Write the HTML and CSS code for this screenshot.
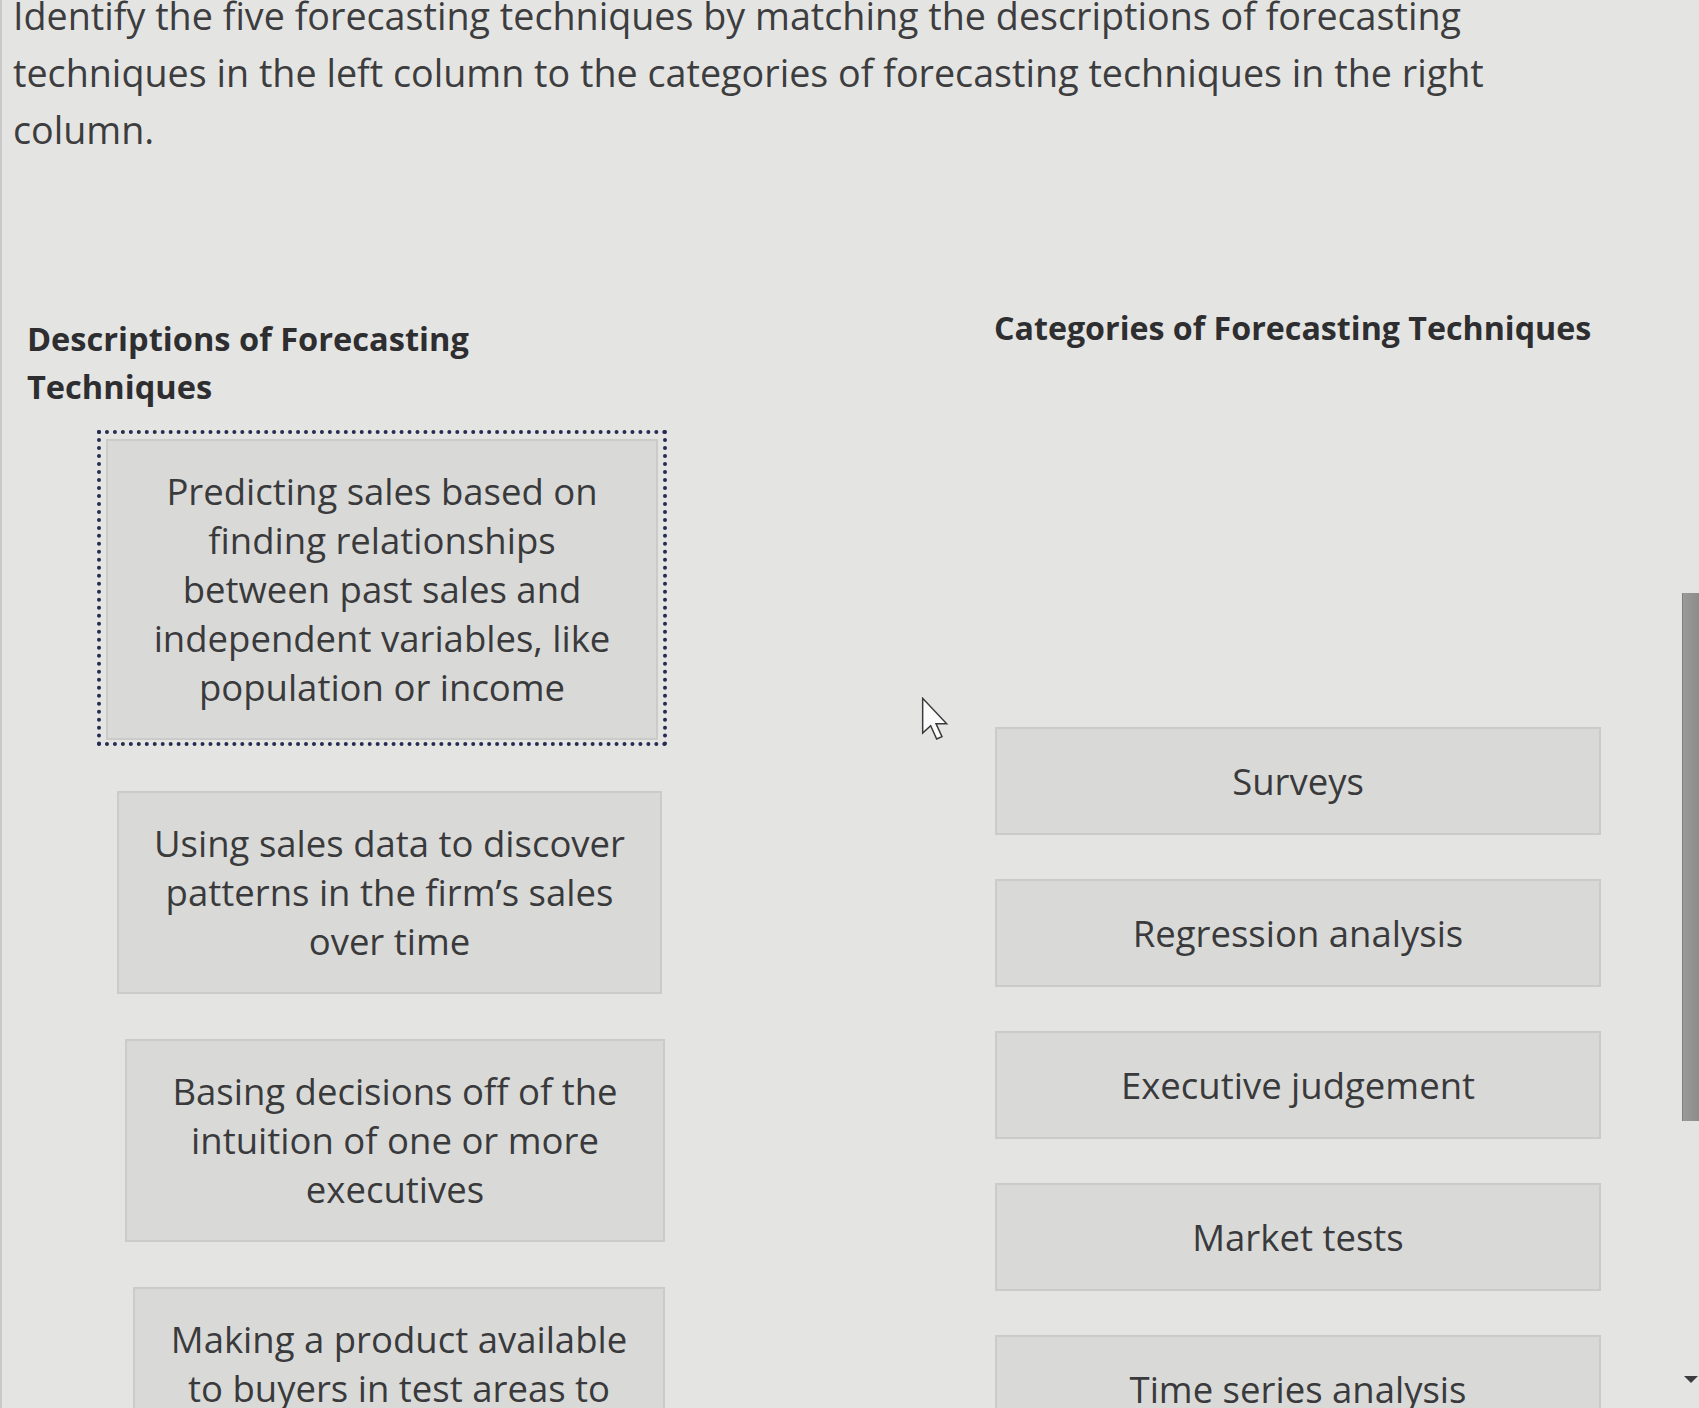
FILE: index.html
```html
<!DOCTYPE html>
<html lang="en">
<head>
<meta charset="utf-8">
<title>Forecasting techniques matching</title>
<link rel="stylesheet" href="styles.css">
</head>
<body>
<div class="page">
  <p class="title">Identify the five forecasting techniques by matching the descriptions of forecasting techniques in the left column to the categories of forecasting techniques in the right column.</p>
  <div class="columns">
    <div class="col col-left">
      <h2 class="heading heading-left">Descriptions of Forecasting Techniques</h2>
      <div class="cards cards-left">
        <div class="focus-ring">
          <div class="card card-desc">Predicting sales based on finding relationships between past sales and independent variables, like population or income</div>
        </div>
        <div class="card card-desc">Using sales data to discover patterns in the firm’s sales over time</div>
        <div class="card card-desc card-shift1">Basing decisions off of the intuition of one or more executives</div>
        <div class="card card-desc card-shift2">Making a product available to buyers in test areas to measure their response</div>
      </div>
    </div>
    <div class="col col-right">
      <h2 class="heading heading-right">Categories of Forecasting Techniques</h2>
      <div class="cards cards-right">
        <div class="card card-cat">Surveys</div>
        <div class="card card-cat">Regression analysis</div>
        <div class="card card-cat">Executive judgement</div>
        <div class="card card-cat">Market tests</div>
        <div class="card card-cat">Time series analysis</div>
      </div>
    </div>
  </div>
</div>
<div class="scrollbar">
  <div class="scroll-thumb"></div>
  <div class="scroll-arrow"></div>
</div>
<svg class="cursor" width="30" height="44" viewBox="0 0 22 33" aria-hidden="true">
  <path d="M1 1 L1 27 L7 21.5 L11.5 31.5 L15.5 29.8 L11 20 L19 20 Z" fill="#fbfbfb" stroke="#3a3a3a" stroke-width="1.1" stroke-linejoin="miter"/>
</svg>
</body>
</html>
```

FILE: styles.css
```css
*, *::before, *::after {
  box-sizing: border-box;
}

html, body {
  margin: 0;
  padding: 0;
}

body {
  background: #e4e5e2;
  font-family: "Open Sans", "Noto Sans", sans-serif;
  color: #3a3a3c;
  width: 1699px;
  height: 1408px;
  overflow: hidden;
  position: relative;
  border-left: 2px solid #c9cac7;
}

.page {
  padding-left: 11px;
}

.title {
  margin: -13px 0 0 0;
  width: 1545px;
  font-size: 37.7px;
  line-height: 57px;
  color: #3d3d3f;
}

.columns {
  display: flex;
  margin-top: 144px;
}

.col-left {
  width: 675px;
  padding-left: 14px;
}

.col-right {
  margin-left: 306px;
  width: 620px;
}

.heading {
  margin: 0;
  font-size: 32.6px;
  font-weight: 700;
  line-height: 48px;
  color: #2e2e31;
}

.heading-left {
  width: 560px;
  padding-top: 13px;
}

.heading-right {
  white-space: nowrap;
  padding-top: 2px;
  font-size: 32.2px;
}

.cards {
  display: flex;
  flex-direction: column;
}

.cards-left {
  margin-top: 19px;
  padding-left: 90px;
  gap: 45px;
}

.cards-left > .card {
  width: 545px;
}

.cards-left > .card-shift1 {
  margin-left: 8px;
  width: 540px;
}

.cards-left > .card-shift2 {
  margin-left: 16px;
  width: 532px;
}

.cards-right {
  margin-top: 375px;
  gap: 44px;
}

.focus-ring {
  border: 4px dotted #262b52;
  padding: 5px 5px 2px 5px;
  margin-left: -20px;
  width: 570px;
}

.card {
  background: #d9dad8;
  border: 2px solid #cbccca;
  text-align: center;
  font-size: 36.5px;
  color: #3a3a3c;
}

.card-desc {
  padding: 26px 24px;
  line-height: 49px;
}

.card-cat {
  height: 108px;
  line-height: 104px;
  margin-left: 1px;
  width: 606px;
}

.scrollbar {
  position: absolute;
  top: 0;
  right: 0;
  width: 17px;
  height: 1408px;
}

.scroll-thumb {
  position: absolute;
  top: 593px;
  right: 0;
  width: 17px;
  height: 528px;
  background: linear-gradient(to right, #9a9b99, #8c8d8b);
  border-left: 1px solid #7f807e;
}

.scroll-arrow {
  position: absolute;
  top: 1376px;
  right: 1px;
  width: 0;
  height: 0;
  border-left: 7px solid transparent;
  border-right: 7px solid transparent;
  border-top: 7px solid #3c3c3e;
}

.cursor {
  position: absolute;
  left: 919px;
  top: 697px;
}
```
